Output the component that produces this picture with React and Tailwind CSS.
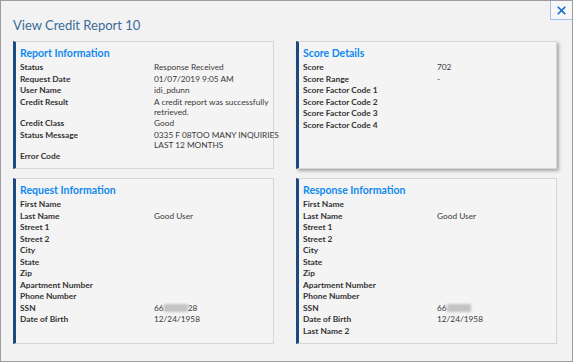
import React from "react";

const report = [
  ["Status", "Response Received"],
  ["Request Date", "01/07/2019 9:05 AM"],
  ["User Name", "idi_pdunn"],
  ["Credit Result", ["A credit report was successfully", "retrieved."]],
  ["Credit Class", "Good"],
  ["Status Message", ["0335 F 08TOO MANY INQUIRIES", "LAST 12 MONTHS"]],
  ["Error Code", ""],
];

const score = [
  ["Score", "702"],
  ["Score Range", "-"],
  ["Score Factor Code 1", ""],
  ["Score Factor Code 2", ""],
  ["Score Factor Code 3", ""],
  ["Score Factor Code 4", ""],
];

function Ssn({ tail }) {
  return (
    <span className="inline-flex items-center">
      66
      <span className="inline-block w-[24px] h-[8px] bg-[#c4c4c4] blur-[1px]" />
      {tail}
    </span>
  );
}

const person = [
  ["First Name", ""],
  ["Last Name", "Good User"],
  ["Street 1", ""],
  ["Street 2", ""],
  ["City", ""],
  ["State", ""],
  ["Zip", ""],
  ["Apartment Number", ""],
  ["Phone Number", ""],
];

function Card({ title, rows, shadow }) {
  return (
    <div
      className={`bg-[#f4f4f4] border border-[#d6d6d6] border-l-[3px] border-l-[#1c4a7e] pl-[4px] pr-[2px] pt-[4px] ${
        shadow ? "shadow-[2px_2px_3px_rgba(0,0,0,0.3)]" : ""
      }`}
    >
      <h2 className="text-[10.5px] font-bold text-[#1089f0] leading-[14px] mb-[2px]">{title}</h2>
      <div className="grid grid-cols-[134px_1fr] gap-y-[1.5px] leading-[10px] text-[#333]">
        {rows.map(([label, value], i) => (
          <React.Fragment key={i}>
            <div className="font-bold text-[8.4px]">{label}</div>
            <div className="text-[8.3px] text-[#3a3a3a] whitespace-nowrap">
              {Array.isArray(value)
                ? value.map((line, j) => <div key={j}>{line}</div>)
                : value}
            </div>
          </React.Fragment>
        ))}
      </div>
    </div>
  );
}

export default function App() {
  return (
    <div
      className="relative w-[573px] h-[362px] bg-[#f2f2f2] border border-[#9c9c9c] pl-[12px] pr-[15px]"
      style={{ fontFamily: 'Lato, "Open Sans", sans-serif' }}
    >
      <button className="absolute top-0 right-0 w-[22px] h-[19px] bg-[#f7f7f7] border border-t-0 border-r-0 border-[#9fc3ee] flex items-center justify-center">
        <svg width="9" height="9" viewBox="0 0 10 10">
          <path d="M1.5 1.5l7 7M8.5 1.5l-7 7" stroke="#1b6ccf" strokeWidth="1.8" strokeLinecap="square" />
        </svg>
      </button>
      <h1 className="text-[13px] leading-[18px] text-[#3a6c98] pt-[15px] pb-[7px]">View Credit Report 10</h1>
      <div className="grid grid-cols-2 gap-x-[22px] grid-rows-[128px_166px] gap-y-[9px]">
        <Card title="Report Information" rows={report} />
        <Card title="Score Details" rows={score} shadow />
        <Card
          title="Request Information"
          rows={[...person, ["SSN", <Ssn tail="28" />], ["Date of Birth", "12/24/1958"]]}
        />
        <Card
          title="Response Information"
          rows={[
            ...person,
            ["SSN", <Ssn tail="" />],
            ["Date of Birth", "12/24/1958"],
            ["Last Name 2", ""],
          ]}
        />
      </div>
    </div>
  );
}
